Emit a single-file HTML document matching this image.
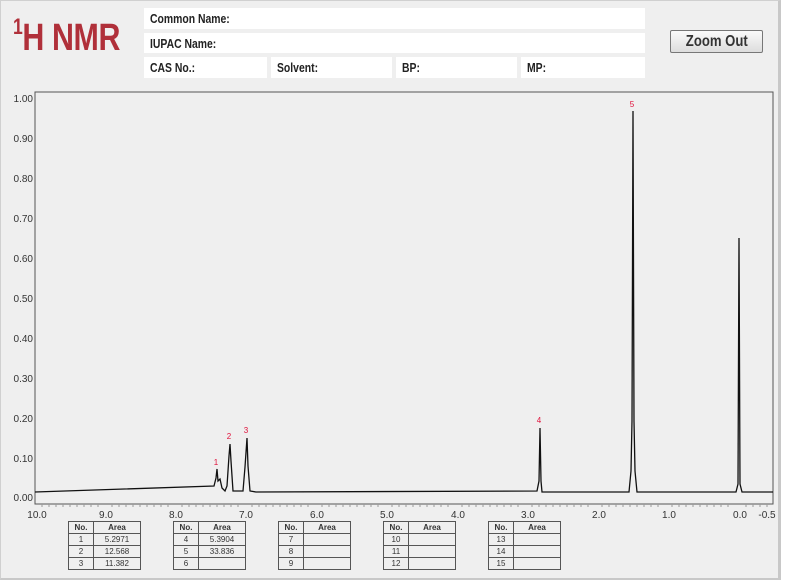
<!DOCTYPE html>
<html><head><meta charset="utf-8"><style>
body{margin:0;width:785px;height:582px;overflow:hidden;background:#fff;font-family:"Liberation Sans",sans-serif}
#w{position:absolute;left:0;top:0;width:781px;height:580px;background:#efefef;border-right:3px solid #c8c8c8;border-bottom:2px solid #c8c8c8;border-left:1px solid #d0d0d0;border-top:1px solid #d0d0d0;box-sizing:border-box}
.f{position:absolute;background:#fff;font-size:13px;font-weight:bold;color:#222;line-height:21px;padding-left:6px;box-sizing:border-box}
.f span{display:inline-block;transform:scaleX(0.8);transform-origin:left}
#t{position:absolute;left:12px;top:16px;color:#b0303a;font-weight:bold;font-size:38px;letter-spacing:-0.5px;transform:scaleX(0.8);transform-origin:left}
#t sup{font-size:22px;position:relative;top:-3px;vertical-align:top}
#b{position:absolute;left:669px;top:29px;width:93px;height:23px;border:1px solid #777;border-radius:2px;background:linear-gradient(#fafafa,#ddd);box-sizing:border-box;font-weight:bold;font-size:16px;text-align:center;line-height:21px;color:#333}
#b span{display:inline-block;transform:scaleX(0.82)}
table{position:absolute;border-collapse:collapse;font-size:8px;top:520px}
td{border:1px solid #555;height:11px;padding:0 3px;line-height:10px;color:#333;text-align:center}
td.n{width:18px}td.a{width:40px}
tr.h td{font-weight:bold}
</style></head><body><div id="w">
<div id="t"><sup>1</sup>H NMR</div>
<div class="f" style="left:143px;top:7px;width:501px;height:21px"><span>Common Name:</span></div>
<div class="f" style="left:143px;top:32px;width:501px;height:20px"><span>IUPAC Name:</span></div>
<div class="f" style="left:143px;top:56px;width:123px;height:21px"><span>CAS No.:</span></div>
<div class="f" style="left:270px;top:56px;width:121px;height:21px"><span>Solvent:</span></div>
<div class="f" style="left:395px;top:56px;width:121px;height:21px"><span>BP:</span></div>
<div class="f" style="left:520px;top:56px;width:124px;height:21px"><span>MP:</span></div>
<div id="b"><span>Zoom Out</span></div>
<svg style="position:absolute;left:0;top:0" width="785" height="582" font-family="Liberation Sans, sans-serif">
<rect x="34" y="91" width="738" height="412" fill="none" stroke="#555" stroke-width="1"/>
<g font-size="10" fill="#333" text-anchor="end">
<text x="32" y="101">1.00</text><text x="32" y="141">0.90</text><text x="32" y="181">0.80</text><text x="32" y="221">0.70</text><text x="32" y="261">0.60</text><text x="32" y="301">0.50</text><text x="32" y="341">0.40</text><text x="32" y="381">0.30</text><text x="32" y="421">0.20</text><text x="32" y="461">0.10</text><text x="32" y="500">0.00</text>
</g>
<g stroke="#999" stroke-width="1">
<path d="M41 503v3M48 503v3M55 503v3M62 503v3M69 503v3M76 503v3M83 503v3M90 503v3M97 503v3M111 503v3M118 503v3M125 503v3M132 503v3M139 503v3M146 503v3M153 503v3M160 503v3M167 503v3M181 503v3M188 503v3M195 503v3M202 503v3M209 503v3M216 503v3M223 503v3M230 503v3M237 503v3M251 503v3M258 503v3M265 503v3M272 503v3M279 503v3M286 503v3M293 503v3M300 503v3M307 503v3M321 503v3M328 503v3M335 503v3M342 503v3M349 503v3M356 503v3M363 503v3M370 503v3M377 503v3M391 503v3M398 503v3M405 503v3M412 503v3M419 503v3M426 503v3M433 503v3M440 503v3M447 503v3M461 503v3M468 503v3M475 503v3M482 503v3M489 503v3M496 503v3M503 503v3M510 503v3M517 503v3M531 503v3M538 503v3M545 503v3M552 503v3M559 503v3M566 503v3M573 503v3M580 503v3M587 503v3M601 503v3M608 503v3M615 503v3M622 503v3M629 503v3M636 503v3M643 503v3M650 503v3M657 503v3M671 503v3M678 503v3M685 503v3M692 503v3M699 503v3M706 503v3M713 503v3M720 503v3M727 503v3M745 503v3M752 503v3M759 503v3M766 503v3"/>
</g>
<g font-size="10" fill="#333" text-anchor="middle">
<text x="36" y="517">10.0</text><text x="105" y="517">9.0</text><text x="175" y="517">8.0</text><text x="245" y="517">7.0</text><text x="316" y="517">6.0</text><text x="386" y="517">5.0</text><text x="457" y="517">4.0</text><text x="527" y="517">3.0</text><text x="598" y="517">2.0</text><text x="668" y="517">1.0</text><text x="739" y="517">0.0</text><text x="766" y="517">-0.5</text>
</g>
<path fill="none" stroke="#111" stroke-width="1.3" d="M34 491L213 485L215 477L216 468L217 480L219 478L221 487L224 490L226 485L228 455L229 443L230 460L232 490L242 490L244 466L246 437L247 465L249 490L255 491L536 490L538 480L539 427L540 480L541 491L628 491L630 470L631 420L632 110L633 420L634 470L636 491L735 491L737 483L738 237L739 483L741 491L772 491"/>
<g font-size="8" fill="#e0103a" text-anchor="middle">
<text x="215" y="464">1</text><text x="228" y="438">2</text><text x="245" y="432">3</text><text x="538" y="422">4</text><text x="631" y="106">5</text>
</g>
</svg>
<table style="left:67px"><tr class="h"><td class="n">No.</td><td class="a">Area</td></tr><tr><td>1</td><td class="a">5.2971</td></tr><tr><td>2</td><td class="a">12.568</td></tr><tr><td>3</td><td class="a">11.382</td></tr></table>
<table style="left:172px"><tr class="h"><td class="n">No.</td><td class="a">Area</td></tr><tr><td>4</td><td class="a">5.3904</td></tr><tr><td>5</td><td class="a">33.836</td></tr><tr><td>6</td><td class="a"></td></tr></table>
<table style="left:277px"><tr class="h"><td class="n">No.</td><td class="a">Area</td></tr><tr><td>7</td><td class="a"></td></tr><tr><td>8</td><td class="a"></td></tr><tr><td>9</td><td class="a"></td></tr></table>
<table style="left:382px"><tr class="h"><td class="n">No.</td><td class="a">Area</td></tr><tr><td>10</td><td class="a"></td></tr><tr><td>11</td><td class="a"></td></tr><tr><td>12</td><td class="a"></td></tr></table>
<table style="left:487px"><tr class="h"><td class="n">No.</td><td class="a">Area</td></tr><tr><td>13</td><td class="a"></td></tr><tr><td>14</td><td class="a"></td></tr><tr><td>15</td><td class="a"></td></tr></table>
</div></body></html>
